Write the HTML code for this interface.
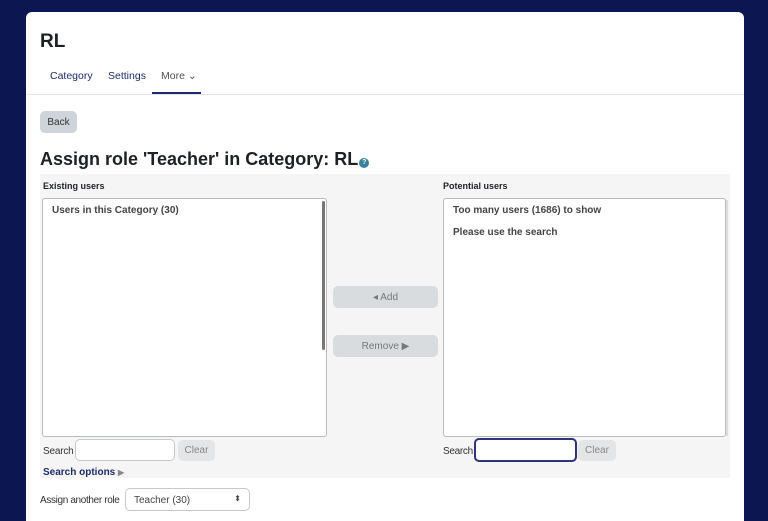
<!DOCTYPE html>
<html><head><style>
*{box-sizing:border-box;margin:0;padding:0}
html,body{width:768px;height:521px;overflow:hidden}
body{background:#0c1650;font-family:"Liberation Sans",sans-serif;position:relative;color:#1d2125}
.card{position:absolute;left:26px;top:12px;width:718px;height:509px;background:#fff;border-radius:6px 6px 0 0}
.a{position:absolute}
.btn{position:absolute;background:#ced4da;border-radius:5px;font-size:10px;color:#333;text-align:center}
.lb{position:absolute;background:#fff;border:1px solid #b8bcc0;border-radius:3px;font-size:10px;font-weight:bold;color:#444}
.inp{position:absolute;background:#fff;border:1px solid #c6c9cc;border-radius:5px}
.s{font-size:10px;color:#333}
</style></head><body>
<div class="card"></div>
<div class="a" style="left:40px;top:31px;font-size:19px;font-weight:bold">RL</div>
<div class="a" style="left:50px;top:70px;font-size:10.5px;color:#1d2b6b">Category</div>
<div class="a" style="left:108px;top:70px;font-size:10.5px;color:#1d2b6b">Settings</div>
<div class="a" style="left:161px;top:70px;font-size:10.5px;color:#555">More ⌄</div>
<div class="a" style="left:152px;top:92px;width:49px;height:2px;background:#1d2b6b"></div>
<div class="a" style="left:26px;top:94px;width:718px;height:1px;background:#e3e5e8"></div>
<div class="btn" style="left:40px;top:111px;width:37px;height:22px;line-height:23px;color:#333">Back</div>
<div class="a" style="left:40px;top:149px;font-size:18px;font-weight:bold">Assign role 'Teacher' in Category: RL<span style="display:inline-block;width:10px;height:10px;border-radius:50%;background:#3a7f9c;color:#fff;font-size:7px;line-height:10px;text-align:center;vertical-align:1px;margin-left:1px">?</span></div>
<div class="a" style="left:40px;top:174px;width:690px;height:304px;background:#f5f5f5"></div>
<div class="a" style="left:43px;top:181px;font-size:9px;font-weight:bold">Existing users</div>
<div class="a" style="left:443px;top:181px;font-size:9px;font-weight:bold">Potential users</div>
<div class="lb" style="left:42px;top:198px;width:285px;height:239px;padding:6px 9px">Users in this Category (30)</div>
<div class="a" style="left:322px;top:201px;width:3px;height:149px;background:#777;border-radius:2px"></div>
<div class="lb" style="left:443px;top:198px;width:283px;height:239px;padding:6px 9px;line-height:11px">Too many users (1686) to show<br><br>Please use the search</div>
<div class="a" style="left:726px;top:200px;width:2px;height:236px;background:#ddd"></div>
<div class="btn" style="left:333px;top:286px;width:105px;height:22px;line-height:23px;color:#777;background:#d9dcdf">◂ Add</div>
<div class="btn" style="left:333px;top:335px;width:105px;height:22px;line-height:23px;color:#777;background:#d9dcdf">Remove ▶</div>
<div class="a s" style="left:43px;top:446px;letter-spacing:-0.2px">Search</div>
<div class="inp" style="left:75px;top:439px;width:100px;height:22px"></div>
<div class="btn" style="left:178px;top:440px;width:37px;height:21px;line-height:22px;color:#888;background:#e3e5e7">Clear</div>
<div class="a" style="left:43px;top:467px;font-size:10px;font-weight:bold;color:#1d2b6b">Search options <span style="color:#888;font-size:8px">▶</span></div>
<div class="a s" style="left:443px;top:446px;letter-spacing:-0.3px">Search</div>
<div class="inp" style="left:474px;top:438px;width:103px;height:24px;border:2px solid #2b347c"></div>
<div class="btn" style="left:578px;top:440px;width:38px;height:21px;line-height:22px;color:#888;background:#e3e5e7">Clear</div>
<div class="a s" style="left:40px;top:495px;letter-spacing:-0.35px">Assign another role</div>
<div class="inp" style="left:125px;top:488px;width:125px;height:23px;font-size:10px;color:#444;padding:6px 8px">Teacher (30)<span style="position:absolute;right:8px;top:5px;font-size:8px">⬍</span></div>
</body></html>
